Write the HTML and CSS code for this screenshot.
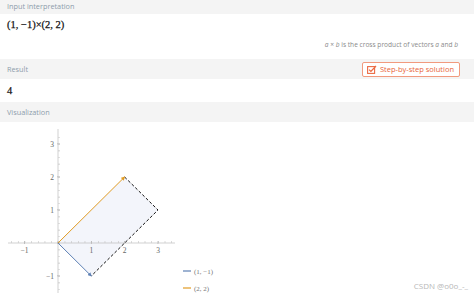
FILE: index.html
```html
<!DOCTYPE html>
<html lang="en">
<head>
    <meta charset="UTF-8">
    <title>Cross product</title>
    <link rel="stylesheet" href="styles.css">
</head>
<body>
    <div class="pod-head top">Input interpretation</div>
    <div class="pod-body input">
        <div class="math">(1, −1)×(2, 2)</div>
        <div class="caption"><i>a</i> × <i>b</i> is the cross product of vectors <i>a</i> and <i>b</i></div>
    </div>

    <div class="pod-head">
        <span>Result</span>
        <button class="step-btn">
            <svg width="10" height="9" viewBox="0 0 10 9">
                <rect x="0.6" y="1.6" width="7" height="6.8" fill="none" stroke="#ec6a43" stroke-width="1.1"/>
                <path d="M2 4.6 L3.9 6.4 L9 1" fill="none" stroke="#ec6a43" stroke-width="1.3"/>
            </svg>
            <span>Step-by-step solution</span>
        </button>
    </div>
    <div class="pod-body result">
        <div class="math">4</div>
    </div>

    <div class="pod-head">Visualization</div>
    <div class="plot">
        <svg width="240" height="182" viewBox="0 0 240 182">
            <defs>
                <marker id="ab" viewBox="0 0 6 6" refX="5" refY="3" markerWidth="4" markerHeight="4" orient="auto">
                    <path d="M0 0 L6 3 L0 6 Z" fill="#5e81b5"/>
                </marker>
                <marker id="ao" viewBox="0 0 6 6" refX="5" refY="3" markerWidth="4" markerHeight="4" orient="auto">
                    <path d="M0 0 L6 3 L0 6 Z" fill="#e19c24"/>
                </marker>
            </defs>

            <!-- parallelogram -->
            <polygon points="58,121 91.3,154 158,88 124.6,55" fill="#f3f5fb"/>

            <!-- axes -->
            <line x1="8" y1="121" x2="175" y2="121" stroke="#bdbdbd" stroke-width="0.7"/>
            <line x1="58" y1="7" x2="58" y2="171" stroke="#bdbdbd" stroke-width="0.7"/>
            <line x1="11.3" y1="120" x2="175" y2="120" stroke="#c4c4c4" stroke-width="2" stroke-dasharray="0.6 6.07"/>
            <line x1="24.3" y1="120.5" x2="160" y2="120.5" stroke="#b0b0b0" stroke-width="3" stroke-dasharray="0.7 32.63"/>
            <line x1="59" y1="15.4" x2="59" y2="171" stroke="#c4c4c4" stroke-width="2" stroke-dasharray="0.6 6"/>
            <line x1="58.5" y1="21.6" x2="58.5" y2="156" stroke="#b0b0b0" stroke-width="3" stroke-dasharray="0.7 32.3"/>

            <g class="tick">
                <text x="24.5" y="131" text-anchor="middle">−1</text>
                <text x="91.3" y="131" text-anchor="middle">1</text>
                <text x="124.6" y="131" text-anchor="middle">2</text>
                <text x="158" y="131" text-anchor="middle">3</text>
                <text x="54" y="24.5" text-anchor="end">3</text>
                <text x="54" y="57.5" text-anchor="end">2</text>
                <text x="54" y="90.5" text-anchor="end">1</text>
                <text x="54" y="156.5" text-anchor="end">−1</text>
            </g>

            <!-- dashed edges -->
            <polyline points="124.6,55 158,88 91.3,154" fill="none" stroke="#111" stroke-width="1" stroke-dasharray="3 2"/>

            <!-- vectors -->
            <line x1="58" y1="121" x2="91.3" y2="154" stroke="#5e81b5" stroke-width="1" marker-end="url(#ab)"/>
            <line x1="58" y1="121" x2="124.6" y2="55" stroke="#e19c24" stroke-width="1" marker-end="url(#ao)"/>

            <!-- legend -->
            <line x1="183" y1="149" x2="191" y2="149" stroke="#5e81b5" stroke-width="1.2"/>
            <text class="legend" x="194" y="151.5">(1, −1)</text>
            <line x1="183" y1="166" x2="191" y2="166" stroke="#e19c24" stroke-width="1.2"/>
            <text class="legend" x="194" y="168.5">(2, 2)</text>
        </svg>
    </div>

    <div class="watermark">CSDN @o0o_-_</div>
</body>
</html>
```

FILE: styles.css
```css
body {
    margin: 0;
    font-family: "Open Sans", sans-serif;
    background-color: #fff;
    width: 474px;
    height: 303px;
    overflow: hidden;
    position: relative;
}
.pod-head {
    background-color: #f4f4f4;
    height: 20px;
    padding: 0 7px;
    display: flex;
    align-items: center;
    justify-content: space-between;
    font-size: 7.3px;
    color: #8d9cab;
}
.pod-head.top {
    height: 14px;
    align-items: flex-start;
    line-height: 12px;
}
.pod-body {
    padding: 0 7px;
}
.pod-body.input {
    height: 45px;
    display: flex;
    flex-direction: column;
}
.pod-body.result {
    height: 23px;
    display: flex;
    align-items: center;
}
.math {
    font-family: "Liberation Serif", serif;
    font-size: 10.5px;
    color: #111;
    -webkit-text-stroke: 0.25px #111;
}
.pod-body.input .math {
    margin-top: 5px;
}
.caption {
    margin-top: 10px;
    align-self: flex-end;
    margin-right: 9px;
    font-size: 6.6px;
    color: #8a8a8a;
}
.step-btn {
    display: flex;
    align-items: center;
    gap: 3px;
    height: 15px;
    width: 98px;
    margin-right: 7px;
    padding: 0 4px;
    background-color: #fff;
    border: 1px solid #f19a7e;
    border-radius: 2px;
    font-family: "Open Sans", sans-serif;
    font-size: 7.5px;
    white-space: nowrap;
    color: #e8643a;
}
.plot {
    height: 182px;
}
.plot svg {
    display: block;
}
.tick {
    font-family: "Liberation Serif", serif;
    font-size: 7.5px;
    fill: #666;
}
.legend {
    font-family: "Liberation Serif", serif;
    font-size: 7px;
    fill: #777;
}
.watermark {
    position: absolute;
    right: 6px;
    bottom: 12px;
    font-size: 8px;
    color: #b8b8b8;
}
```
